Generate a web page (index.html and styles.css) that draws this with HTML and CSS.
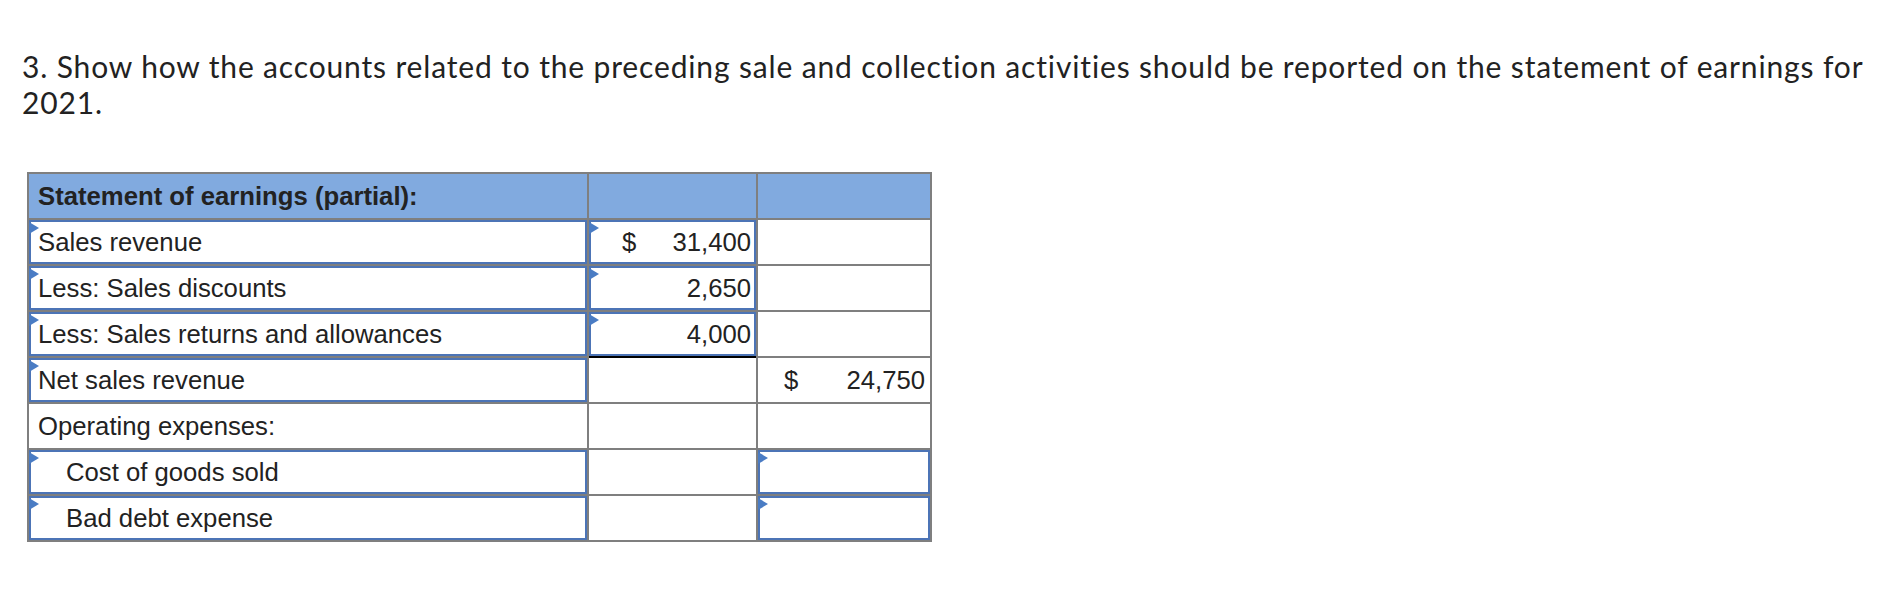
FILE: index.html
```html
<!DOCTYPE html>
<html lang="en">
<head>
<meta charset="utf-8">
<title>Statement of earnings</title>
<link rel="stylesheet" href="styles.css">
</head>
<body>
<div class="page">
  <p class="question">3. Show how the accounts related to the preceding sale and collection activities should be reported on the statement of earnings for 2021.</p>
  <div class="sheet">
    <div class="cell head">Statement of earnings (partial):</div>
    <div class="cell head"></div>
    <div class="cell head"></div>

    <div class="cell input"><span class="flag"></span>Sales revenue</div>
    <div class="cell input num mid"><span class="flag"></span><span class="cur">$</span><span class="amt">31,400</span></div>
    <div class="cell"></div>

    <div class="cell input"><span class="flag"></span>Less: Sales discounts</div>
    <div class="cell input num mid"><span class="flag"></span><span class="amt">2,650</span></div>
    <div class="cell"></div>

    <div class="cell input"><span class="flag"></span>Less: Sales returns and allowances</div>
    <div class="cell input num mid underline"><span class="flag"></span><span class="amt">4,000</span></div>
    <div class="cell"></div>

    <div class="cell input"><span class="flag"></span>Net sales revenue</div>
    <div class="cell"></div>
    <div class="cell num last"><span class="cur">$</span><span class="amt">24,750</span></div>

    <div class="cell">Operating expenses:</div>
    <div class="cell"></div>
    <div class="cell"></div>

    <div class="cell input indent"><span class="flag"></span>Cost of goods sold</div>
    <div class="cell"></div>
    <div class="cell input"><span class="flag"></span></div>

    <div class="cell input indent"><span class="flag"></span>Bad debt expense</div>
    <div class="cell"></div>
    <div class="cell input"><span class="flag"></span></div>
  </div>
</div>
</body>
</html>
```

FILE: styles.css
```css
html, body {
  margin: 0;
  padding: 0;
  background: #ffffff;
}

.page {
  padding: 48px 0 0 22px;
}

.question {
  margin: 0;
  max-width: 1862px;
  font-family: "Lato", "Open Sans", sans-serif;
  font-size: 30px;
  line-height: 36px;
  letter-spacing: 0.85px;
  color: #222222;
}

.sheet {
  display: grid;
  grid-template-columns: 558px 167px 172px;
  grid-auto-rows: 44px;
  gap: 2px;
  padding: 2px;
  width: max-content;
  margin: 52px 0 0 5px;
  background: #7f7f7f;
  font-family: "Liberation Sans", Arial, sans-serif;
  font-size: 25.7px;
  color: #222222;
}

.cell {
  position: relative;
  box-sizing: border-box;
  display: flex;
  align-items: center;
  padding: 0 6px 0 9px;
  background: #ffffff;
  white-space: nowrap;
}

.head {
  background: #81aadf;
  font-weight: bold;
}

.input {
  border: 2px solid #4c74b6;
  padding-left: 7px;
}

.indent {
  padding-left: 35px;
}

.flag {
  position: absolute;
  top: 0;
  left: -2px;
  width: 0;
  height: 0;
  border-top: 6.5px solid transparent;
  border-bottom: 6.5px solid transparent;
  border-left: 10px solid #4a7cc4;
}

.num {
  justify-content: flex-end;
}

.num .cur {
  margin-right: auto;
}

.mid {
  padding-left: 31px;
  padding-right: 3px;
}

.last {
  padding-left: 26px;
  padding-right: 5px;
}

.underline {
  box-shadow: 0 2px 0 0 #000000;
}
```
